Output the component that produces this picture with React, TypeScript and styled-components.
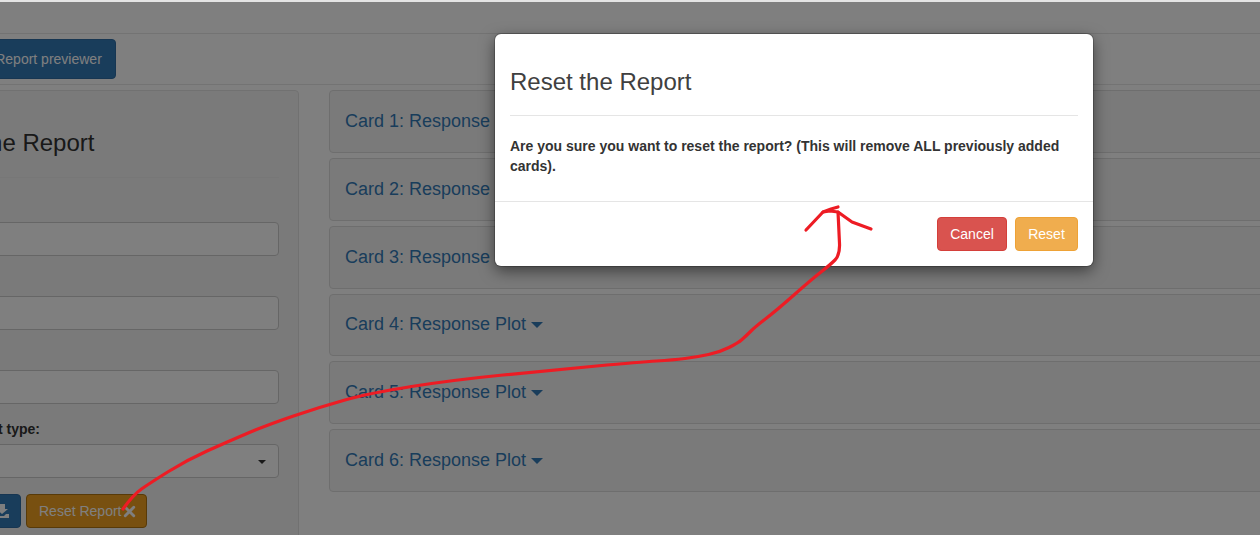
import styled, { createGlobalStyle } from "styled-components";
import { X } from "lucide-react";

const Global = createGlobalStyle`
  html, body {
    margin: 0;
    padding: 0;
    background: #fff;
    font-family: "Liberation Sans", Arial, sans-serif;
    font-size: 14px;
    color: #333;
  }
  * { box-sizing: border-box; }
`;

const Page = styled.div`
  position: relative;
  width: 1260px;
  height: 535px;
  overflow: hidden;
  background: #fff;
`;

const TopStrip = styled.div`
  height: 2px;
  background: #e4e4e4;
`;

const Navbar = styled.div`
  height: 32px;
  background: #fff;
  border-bottom: 1px solid #e7e7e7;
`;

const Toolbar = styled.div`
  height: 51px;
  padding: 5px 0 0;
  border-bottom: 1px solid #e7e7e7;
`;

const Button = styled.button<{ $variant: "primary" | "danger" | "warning" | "deep" }>`
  height: 34px;
  padding: 0 12px;
  display: inline-flex;
  align-items: center;
  justify-content: center;
  white-space: nowrap;
  font: 14px "Liberation Sans", Arial, sans-serif;
  color: #fff;
  border-radius: 4px;
  border: 1px solid
    ${({ $variant }) =>
      ({ primary: "#2e6da4", danger: "#d43f3a", warning: "#eea236", deep: "#b07410" })[$variant]};
  background: ${({ $variant }) =>
    ({ primary: "#337ab7", danger: "#d9534f", warning: "#f0ad4e", deep: "#f0a020" })[$variant]};
`;

const PreviewButton = styled(Button)`
  height: 40px;
  width: 135px;
  margin-left: -19px;
  padding: 0 15px;
`;

const Main = styled.div`
  display: flex;
  gap: 30px;
  padding-top: 5px;
  margin-left: -110px;
`;

const Panel = styled.section`
  flex: none;
  width: 409px;
  height: 600px;
  padding: 39px 19px 0 22px;
  background: #f5f5f5;
  border: 1px solid #e3e3e3;
  border-radius: 4px;
`;

const PanelTitle = styled.h2`
  margin: 0 0 18px;
  padding-bottom: 21px;
  border-bottom: 1px solid #eee;
  font-size: 24px;
  line-height: 26px;
  font-weight: 400;
`;

const Field = styled.div`
  margin-bottom: 14px;
`;

const Label = styled.div`
  height: 20px;
  margin-bottom: 6px;
  padding-left: 4px;
  font-weight: 700;
  line-height: 22px;
  white-space: nowrap;
  color: #333;
`;

const Input = styled.div`
  position: relative;
  height: 34px;
  background: #fff;
  border: 1px solid #ccc;
  border-radius: 4px;
`;

const SelectCaret = styled.span`
  position: absolute;
  right: 12px;
  top: 15px;
  border-left: 4px solid transparent;
  border-right: 4px solid transparent;
  border-top: 4px solid #333;
`;

const ActionRow = styled.div`
  display: flex;
  gap: 5px;
  margin-top: 16px;
`;

const DownloadButton = styled(Button)`
  width: 108px;
  padding: 0 11px 0 0;
  justify-content: flex-end;
  gap: 4px;
`;

const ResetButton = styled(Button)`
  width: 121px;
  justify-content: flex-start;
  padding: 0 0 0 12px;
`;

const Cards = styled.div`
  flex: none;
  width: 1100px;
  display: flex;
  flex-direction: column;
  gap: 5px;
`;

const Card = styled.div`
  height: 62.85px;
  padding: 0 15px;
  display: flex;
  align-items: center;
  gap: 5px;
  background: #f5f5f5;
  border: 1px solid #ddd;
  border-radius: 4px;
  font-size: 18px;
  color: #337ab7;
`;

const Caret = styled.span`
  border-left: 6px solid transparent;
  border-right: 6px solid transparent;
  border-top: 6px solid #337ab7;
`;

const Backdrop = styled.div`
  position: absolute;
  inset: 2px 0 0 0;
  padding: 32px 0 0 495px;
  background: rgba(0, 0, 0, 0.5);
`;

const Modal = styled.div`
  width: 598px;
  height: 232px;
  background: #fff;
  border-radius: 6px;
  box-shadow: 0 0 0 1px rgba(0, 0, 0, 0.2), 0 5px 15px rgba(0, 0, 0, 0.5);
  display: flex;
  flex-direction: column;
`;

const ModalHeader = styled.div`
  margin: 0 15px;
  height: 82px;
  padding-top: 35px;
  border-bottom: 1px solid #e5e5e5;
`;

const ModalTitle = styled.h4`
  margin: 0;
  font-size: 24px;
  line-height: 26px;
  font-weight: 400;
  color: #404040;
`;

const ModalBody = styled.div`
  height: 85px;
  padding: 20px 15px 0;
  font-size: 14px;
  font-weight: 700;
  line-height: 20px;
  color: #333;
`;

const ModalFooter = styled.div`
  flex: 1;
  display: flex;
  justify-content: flex-end;
  gap: 8px;
  padding: 15px;
  border-top: 1px solid #e5e5e5;
`;

const CancelButton = styled(Button)`
  width: 70px;
  padding: 0;
`;

const ConfirmButton = styled(Button)`
  width: 63px;
  padding: 0;
`;

const Scribble = styled.svg`
  position: absolute;
  inset: 0;
  pointer-events: none;
`;

type Point = [number, number];

const shaft: Point[] = [
  [123, 509], [133, 495], [150, 483], [187, 460], [227, 442], [267, 425], [320, 407],
  [370, 393], [453, 380], [553, 370], [640, 362], [673, 360], [697, 357], [720, 352],
  [738, 343], [746, 336], [755, 327], [777, 310], [812, 279], [830, 265], [840, 255], [839, 232], [838, 212],
];

// midpoints as on-curve points, the drawn points as controls, so the freehand line stays smooth
function smooth(points: Point[]) {
  let d = `M${points[0][0]} ${points[0][1]}`;
  for (let i = 1; i < points.length - 1; i++) {
    const [x, y] = points[i];
    const [nx, ny] = points[i + 1];
    d += ` Q${x} ${y} ${(x + nx) / 2} ${(y + ny) / 2}`;
  }
  const last = points[points.length - 1];
  return `${d} L${last[0]} ${last[1]}`;
}

function DownloadIcon() {
  return (
    <svg width="14" height="14" viewBox="0 0 14 14" fill="currentColor">
      <path d="M4 0h6v5h3L7 10 1 5h3z" />
      <path d="M0 10h3l2 2h4l2-2h3v4H0z" />
    </svg>
  );
}

const cardNumbers = [1, 2, 3, 4, 5, 6];

export default function App() {
  return (
    <Page>
      <Global />
      <TopStrip />
      <Navbar />
      <Toolbar>
        <PreviewButton $variant="primary">Report previewer</PreviewButton>
      </Toolbar>
      <Main>
        <Panel>
          <PanelTitle>Reset the Report</PanelTitle>
          <Field>
            <Label>Title:</Label>
            <Input />
          </Field>
          <Field>
            <Label>Author:</Label>
            <Input />
          </Field>
          <Field>
            <Label>Date:</Label>
            <Input />
          </Field>
          <Field>
            <Label>Select report type:</Label>
            <Input>
              <SelectCaret />
            </Input>
          </Field>
          <ActionRow>
            <DownloadButton $variant="primary">
              Download
              <DownloadIcon />
            </DownloadButton>
            <ResetButton $variant="deep">
              Reset Report
              <X size={17} strokeWidth={4} />
            </ResetButton>
          </ActionRow>
        </Panel>
        <Cards>
          {cardNumbers.map((n) => (
            <Card key={n}>
              Card {n}: Response Plot
              <Caret />
            </Card>
          ))}
        </Cards>
      </Main>
      <Backdrop>
        <Modal>
          <ModalHeader>
            <ModalTitle>Reset the Report</ModalTitle>
          </ModalHeader>
          <ModalBody>
            Are you sure you want to reset the report? (This will remove ALL previously added cards).
          </ModalBody>
          <ModalFooter>
            <CancelButton $variant="danger">Cancel</CancelButton>
            <ConfirmButton $variant="warning">Reset</ConfirmButton>
          </ModalFooter>
        </Modal>
      </Backdrop>
      <Scribble width="1260" height="535" viewBox="0 0 1260 535" fill="none" stroke="#ed1c24" strokeWidth="3.2" strokeLinecap="round" strokeLinejoin="round">
        <path d={smooth(shaft)} />
        <path d="M806 230 L823 212 L831 209 L838 207" />
        <path d="M823 212 L830 211 L838 212 L852 222 L871 229" />
      </Scribble>
    </Page>
  );
}
